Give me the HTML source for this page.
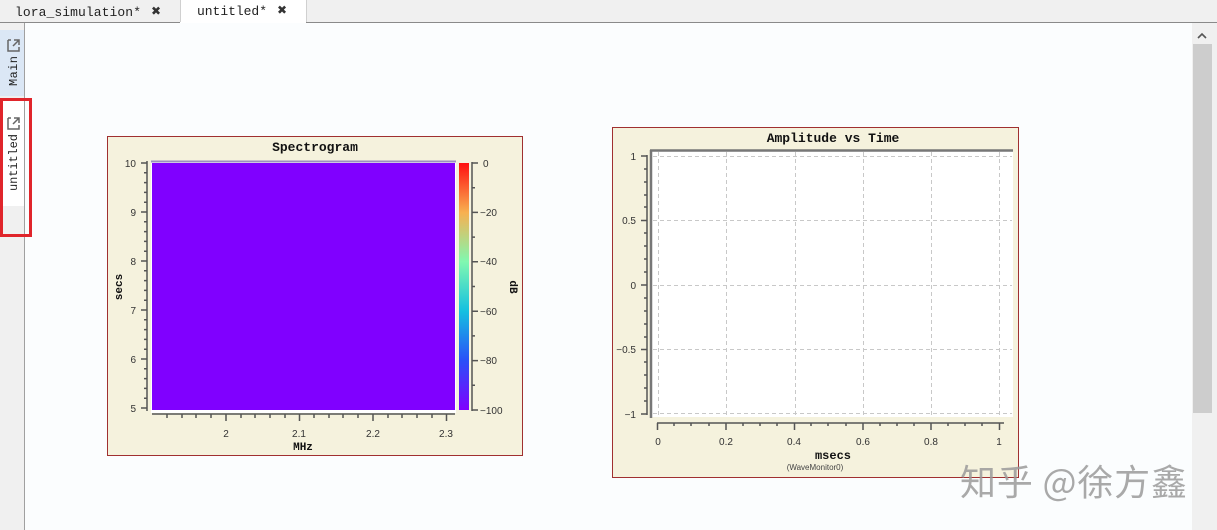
<!DOCTYPE html>
<html><head><meta charset="utf-8"><style>
html,body{margin:0;padding:0;width:1217px;height:530px;overflow:hidden;background:#f0f0f0;font-family:"Liberation Mono",monospace}
svg{position:absolute;left:0;top:0}
</style></head><body>
<svg width="1217" height="530" xmlns="http://www.w3.org/2000/svg" font-family="Liberation Mono, monospace">
<rect x="0" y="0" width="1217" height="530" fill="#f0f0f0"/>
<rect x="180" y="0" width="126" height="23" fill="#ffffff"/>
<line x1="180.5" y1="0" x2="180.5" y2="22" stroke="#d0d0d0"/>
<line x1="306.5" y1="0" x2="306.5" y2="22" stroke="#d0d0d0"/>
<text x="15" y="16" font-size="13" fill="#222" textLength="126">lora_simulation*</text>
<text x="151" y="15" font-size="12" font-weight="bold" fill="#333" font-family="DejaVu Sans">✖</text>
<text x="197" y="15" font-size="13" fill="#222" textLength="70">untitled*</text>
<text x="277" y="14" font-size="12" font-weight="bold" fill="#333" font-family="DejaVu Sans">✖</text>
<line x1="0" y1="22.5" x2="1217" y2="22.5" stroke="#8a8a8a"/>
<line x1="180" y1="22.5" x2="306" y2="22.5" stroke="#ffffff"/>
<rect x="25" y="23" width="1167" height="507" fill="#fbfdfe"/>
<line x1="24.5" y1="23" x2="24.5" y2="530" stroke="#a0a0a0"/>
<rect x="0" y="30" width="24" height="66" fill="#dbe7f5"/>
<rect x="1" y="100" width="23" height="106" fill="#ffffff"/>
<g stroke="#666" fill="none" stroke-width="1.5"><path d="M8 40v11h11v-4M11 40h-3M14 40h5v5M19 40l-6 6"/><path d="M8 118v11h11v-4M11 118h-3M14 118h5v5M19 118l-6 6"/></g>
<text transform="translate(17,86) rotate(-90)" font-size="12" fill="#222" textLength="30">Main</text>
<text transform="translate(17,191) rotate(-90)" font-size="12" fill="#222" textLength="57">untitled</text>
<rect x="1.5" y="99.5" width="29" height="136" fill="none" stroke="#e0252b" stroke-width="3"/>
<rect x="1192" y="23" width="20" height="507" fill="#f0f0f0"/>
<rect x="1193" y="44" width="19" height="369" fill="#cdcdcd"/>
<path d="M1198 38l4-4 4 4" stroke="#555" stroke-width="1.6" fill="none"/>

<rect x="107.5" y="136.5" width="415" height="319" fill="#f5f2dd" stroke="#a03030"/>
<text x="315" y="151" font-size="13" font-weight="bold" text-anchor="middle" fill="#111">Spectrogram</text>
<rect x="151" y="161" width="305" height="252" fill="#ffffff"/>
<rect x="152" y="163" width="303" height="247" fill="#8000ff"/>
<line x1="151" y1="161.5" x2="456" y2="161.5" stroke="#9a8fbf" stroke-width="2"/>
<g stroke="#555" stroke-width="1.5">
<line x1="147" y1="161" x2="147" y2="411"/>
<path d="M141 163h6M141 212h6M141 261h6M141 310h6M141 359h6M141 408h6"/>
<path d="M144 172.8h3M144 182.6h3M144 192.4h3M144 202.2h3M144 221.8h3M144 231.6h3M144 241.4h3M144 251.2h3M144 270.8h3M144 280.6h3M144 290.4h3M144 300.2h3M144 319.8h3M144 329.6h3M144 339.4h3M144 349.2h3M144 368.8h3M144 378.6h3M144 388.4h3M144 398.2h3"/>
<line x1="152" y1="414" x2="455" y2="414"/>
<path d="M226 414v7M299.5 414v7M373 414v7M446.5 414v7"/>
<path d="M167 414v4M182 414v4M196 414v4M211 414v4M241 414v4M255 414v4M270 414v4M285 414v4M314 414v4M329 414v4M343 414v4M358 414v4M388 414v4M402 414v4M417 414v4M432 414v4"/>
<line x1="472" y1="162" x2="472" y2="411"/>
<path d="M472 163h6M472 212.4h6M472 261.8h6M472 311.2h6M472 360.6h6M472 410h6"/>
<path d="M472 187.7h3M472 237.1h3M472 286.5h3M472 335.9h3M472 385.3h3"/>
</g>
<defs><linearGradient id="cb" x1="0" y1="1" x2="0" y2="0">
<stop offset="0" stop-color="#8000ff"/><stop offset="0.2" stop-color="#2a50f8"/><stop offset="0.4" stop-color="#14c0e0"/><stop offset="0.6" stop-color="#80f8b0"/><stop offset="0.8" stop-color="#f8b050"/><stop offset="1" stop-color="#ff1010"/></linearGradient></defs>
<rect x="459" y="163" width="10" height="247" fill="url(#cb)"/>
<g font-size="10" fill="#333" font-family="Liberation Sans, sans-serif">
<g text-anchor="end"><text x="136" y="167">10</text><text x="136" y="216">9</text><text x="136" y="265">8</text><text x="136" y="314">7</text><text x="136" y="363">6</text><text x="136" y="412">5</text></g>
<g text-anchor="middle"><text x="226" y="437">2</text><text x="299" y="437">2.1</text><text x="373" y="437">2.2</text><text x="446" y="437">2.3</text></g>
<text x="483" y="167">0</text><text x="480" y="216">−20</text><text x="480" y="265">−40</text><text x="480" y="315">−60</text><text x="480" y="364">−80</text><text x="480" y="414">−100</text>
</g>
<text x="303" y="450" font-size="11" font-weight="bold" text-anchor="middle" fill="#111">MHz</text>
<text transform="translate(122,287) rotate(-90)" font-size="11" font-weight="bold" text-anchor="middle" fill="#111">secs</text>
<text transform="translate(510,287) rotate(90)" font-size="11" font-weight="bold" text-anchor="middle" fill="#111">dB</text>

<rect x="612.5" y="127.5" width="406" height="350" fill="#f5f2dd" stroke="#a03030"/>
<text x="833" y="142" font-size="13" font-weight="bold" text-anchor="middle" fill="#111">Amplitude vs Time</text>
<rect x="652" y="151" width="361" height="266" fill="#ffffff"/>
<g stroke="#c8c8c8" stroke-dasharray="4,3" stroke-width="1">
<path d="M658.5 152v264M726.5 152v264M795.5 152v264M863.5 152v264M931.5 152v264M999.5 152v264"/>
<path d="M653 156.5h359M653 220.5h359M653 285.5h359M653 349.5h359M653 413.5h359"/>
</g>
<g stroke="#777" stroke-width="2.5"><line x1="651" y1="150" x2="651" y2="418"/><line x1="650" y1="150.5" x2="1013" y2="150.5"/></g>
<g stroke="#555" stroke-width="1.5">
<path d="M641 156h6M641 220.5h6M641 285h6M641 349.5h6M641 414h6"/>
<path d="M644 169h3M644 182h3M644 195h3M644 207h3M644 233h3M644 246h3M644 259h3M644 272h3M644 298h3M644 311h3M644 324h3M644 337h3M644 362h3M644 375h3M644 388h3M644 401h3"/>
<line x1="647" y1="155" x2="647" y2="415"/>
<line x1="657" y1="423" x2="1004" y2="423"/>
<path d="M657.5 423v7M726 423v7M794.5 423v7M863 423v7M931 423v7M999.5 423v7"/>
<path d="M674 423v3M691 423v3M709 423v3M743 423v3M760 423v3M777 423v3M811 423v3M828 423v3M846 423v3M880 423v3M897 423v3M914 423v3M948 423v3M965 423v3M982 423v3"/>
</g>
<g font-size="10" fill="#333" font-family="Liberation Sans, sans-serif">
<g text-anchor="end"><text x="636" y="160">1</text><text x="636" y="224">0.5</text><text x="636" y="289">0</text><text x="636" y="353">−0.5</text><text x="636" y="418">−1</text></g>
<g text-anchor="middle"><text x="658" y="445">0</text><text x="726" y="445">0.2</text><text x="794" y="445">0.4</text><text x="863" y="445">0.6</text><text x="931" y="445">0.8</text><text x="999" y="445">1</text></g>
</g>
<text x="833" y="459" font-size="12" font-weight="bold" text-anchor="middle" fill="#111">msecs</text>
<text x="815" y="470" font-size="8" text-anchor="middle" fill="#444" font-family="Liberation Sans, sans-serif">(WaveMonitor0)</text>

<text x="960" y="495" font-size="36" fill="#9a9a9a" fill-opacity="0.85" font-family="Noto Sans CJK SC, sans-serif" textLength="227">知乎 @徐方鑫</text>
</svg>
</body></html>
